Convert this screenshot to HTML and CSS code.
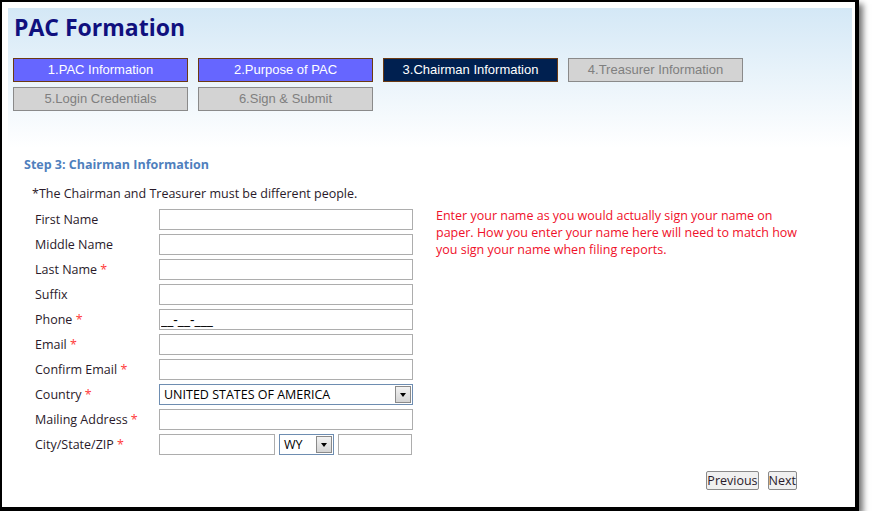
FILE: index.html
```html
<!DOCTYPE html>
<html>
<head>
<meta charset="utf-8">
<link rel="stylesheet" href="styles.css">
</head>
<body>
<div class="frame">
  <div class="page">
    <h1 class="title">PAC Formation</h1>
    <div class="tabs">
      <div class="tab done">1.PAC Information</div>
      <div class="tab done">2.Purpose of PAC</div>
      <div class="tab current">3.Chairman Information</div>
      <div class="tab todo">4.Treasurer Information</div>
      <div class="tab todo">5.Login Credentials</div>
      <div class="tab todo">6.Sign &amp; Submit</div>
    </div>
    <h2 class="step">Step 3: Chairman Information</h2>
    <p class="note">*The Chairman and Treasurer must be different people.</p>
    <div class="formwrap">
      <div class="form">
        <label class="lbl">First Name</label><input class="txt" type="text">
        <label class="lbl">Middle Name</label><input class="txt" type="text">
        <label class="lbl">Last Name <span class="req">*</span></label><input class="txt" type="text">
        <label class="lbl">Suffix</label><input class="txt" type="text">
        <label class="lbl">Phone <span class="req">*</span></label><input class="txt phone" type="text" value="__-__-___">
        <label class="lbl">Email <span class="req">*</span></label><input class="txt" type="text">
        <label class="lbl">Confirm Email <span class="req">*</span></label><input class="txt" type="text">
        <label class="lbl">Country <span class="req">*</span></label>
        <div class="select"><span class="val">UNITED STATES OF AMERICA</span><span class="arrow"></span></div>
        <label class="lbl">Mailing Address <span class="req">*</span></label><input class="txt" type="text">
        <label class="lbl">City/State/ZIP <span class="req">*</span></label>
        <div class="csz">
          <input class="txt city" type="text">
          <div class="select state"><span class="val">WY</span><span class="arrow"></span></div>
          <input class="txt zip" type="text">
        </div>
      </div>
      <p class="help">Enter your name as you would actually sign your name on paper. How you enter your name here will need to match how you sign your name when filing reports.</p>
    </div>
    <div class="nav">
      <button class="btn">Previous</button>
      <button class="btn">Next</button>
    </div>
  </div>
</div>
</body>
</html>
```
FILE: styles.css
```css
html, body {
  margin: 0;
  padding: 0;
  background: #fff;
}
.frame {
  box-sizing: border-box;
  width: 859px;
  height: 511px;
  border-style: solid;
  border-color: #000;
  border-width: 2px 4px 4px 2px;
  padding: 6px 3px 0 6px;
  background: #fff;
  box-shadow: 4px 4px 6px rgba(0,0,0,0.55);
}
.page {
  height: 100%;
  background: linear-gradient(to bottom, #d4e8f6 0px, #ffffff 140px);
  font-family: "Open Sans", "Noto Sans", sans-serif;
  font-size: 12.5px;
  color: #2a1a2a;
  overflow: hidden;
}
.title {
  margin: 0;
  padding: 3px 0 0 6px;
  height: 33px;
  font-family: "Open Sans", sans-serif;
  font-weight: 700;
  font-size: 23px;
  line-height: 32px;
  color: #10107e;
}
.tabs {
  display: grid;
  grid-template-columns: repeat(4, 175px);
  column-gap: 10px;
  row-gap: 5px;
  margin: 14px 0 0 5px;
}
.tab {
  box-sizing: border-box;
  height: 24px;
  line-height: 22px;
  text-align: center;
  font-family: "Liberation Sans", Arial, sans-serif;
  font-size: 13px;
  border: 1px solid;
}
.tab.done {
  background: #6666ff;
  border-color: #6b3a12;
  color: #fff;
}
.tab.current {
  background: #002050;
  border-color: #6b3a12;
  color: #fff;
}
.tab.todo {
  background: #d3d3d3;
  border-color: #8a8a8a;
  color: #7f7f7f;
}
.step {
  margin: 46px 0 0 16px;
  font-size: 12.5px;
  font-weight: 700;
  line-height: 16px;
  color: #4f7fbd;
}
.note {
  margin: 13px 0 0 24px;
  line-height: 16px;
}
.formwrap {
  display: flex;
  margin: 7px 0 0 27px;
}
.form {
  display: grid;
  grid-template-columns: 124px 254px;
  grid-auto-rows: 21px;
  row-gap: 4px;
}
.lbl {
  line-height: 21px;
  white-space: nowrap;
}
.req {
  color: #ff3a3a;
}
.txt {
  box-sizing: border-box;
  width: 254px;
  height: 21px;
  margin: 0;
  border: 1px solid #adadad;
  background: #fff;
  padding: 0 3px;
  font-family: "Open Sans", sans-serif;
  font-size: 12.5px;
  color: #000;
  outline: none;
}
.txt.phone {
  padding-left: 1px;
  font-size: 14px;
}
.select {
  box-sizing: border-box;
  height: 21px;
  display: flex;
  align-items: center;
  border: 1px solid #6e8db1;
  background: #fff;
  padding: 0 1px 0 4px;
  color: #000;
}
.select .val {
  flex: 1;
  line-height: 19px;
}
.arrow {
  box-sizing: border-box;
  width: 16px;
  height: 17px;
  border: 1px solid #8a8a8a;
  background: linear-gradient(to bottom, #f2f2f2, #d4d4d4);
  position: relative;
}
.arrow::after {
  content: "";
  position: absolute;
  left: 4px;
  top: 6px;
  border-left: 3.5px solid transparent;
  border-right: 3.5px solid transparent;
  border-top: 4px solid #000;
}
.csz {
  display: flex;
  gap: 4px;
}
.txt.city {
  width: 116px;
}
.select.state {
  width: 55px;
}
.txt.zip {
  width: 74px;
}
.help {
  margin: -2px 0 0 23px;
  width: 366px;
  color: #f0102a;
  line-height: 17px;
}
.nav {
  display: flex;
  justify-content: flex-end;
  gap: 9px;
  margin: 16px 55px 0 0;
}
.btn {
  box-sizing: border-box;
  height: 19px;
  padding: 0;
  font-family: "Open Sans", sans-serif;
  font-size: 12.5px;
  line-height: 15px;
  color: #2a1a2a;
  background: #f0f0f0;
  border: 1px solid #8a8a8a;
  border-radius: 2px;
}
```
